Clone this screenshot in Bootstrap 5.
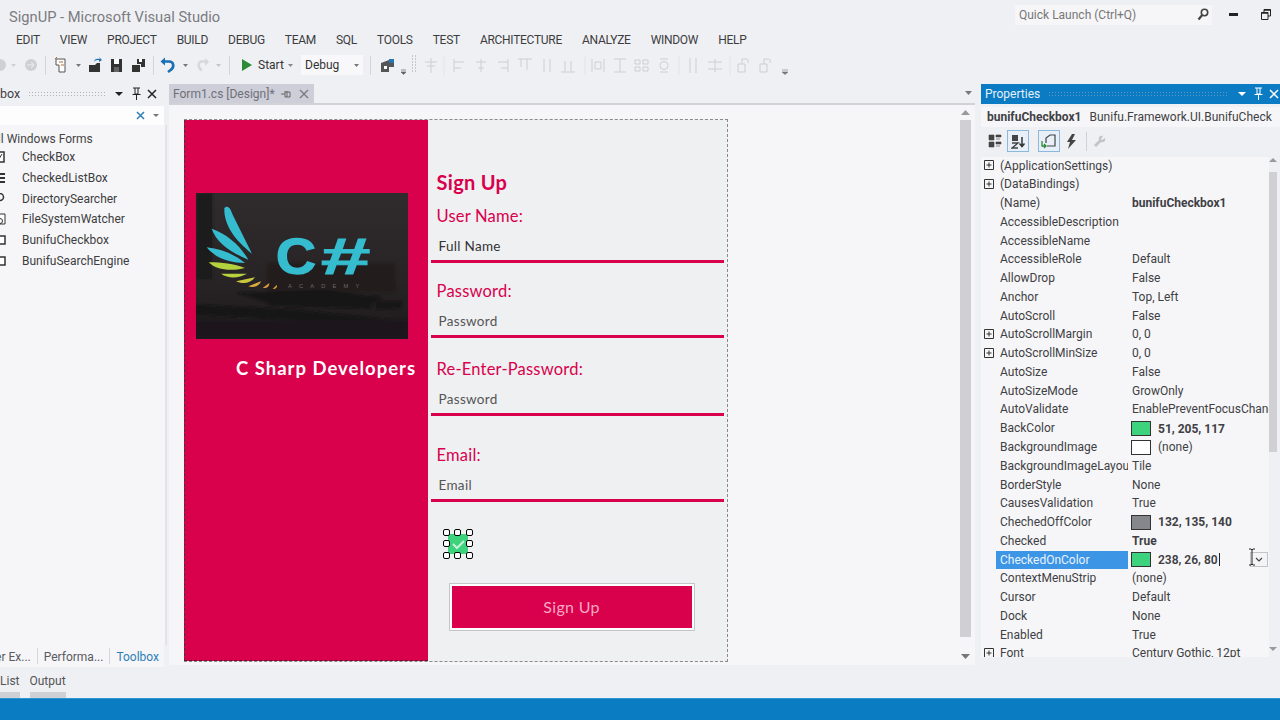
<!DOCTYPE html>
<html lang="en">
<head>
  <meta charset="UTF-8">
  <title>SignUP - Microsoft Visual Studio</title>
  <link href="https://cdn.jsdelivr.net/npm/bootstrap@5.3.2/dist/css/bootstrap.min.css" rel="stylesheet">
  <style>
    html, body { height: 100%; }
    body { width: 1280px; height: 720px; overflow: hidden; background: #eff0f4; color: #3f3f44; font-family: Roboto, "Noto Sans", sans-serif; font-size: 12px; line-height: 1; }
    svg { display: block; flex: none; }

    /* window chrome */
    .title-row { height: 30px; padding-left: 9px; }
    .title-text { font-size: 14.7px; color: #7b7b80; padding-top: 5px; }
    .quick-box { width: 197px; height: 20px; margin-top: -1px; background: #f6f6f8; color: #777; padding: 0 3px 0 4px; font-size: 12px; }
    .win-btns { width: 68px; padding-left: 17px; gap: 23px; margin-top: -2px; }
    .menu-row { height: 20px; padding-left: 16px; gap: 20px; font-size: 12px; letter-spacing: -.28px; color: #3d3d40; }
    .tool-row { height: 22px; margin-top: 4px; }
    .tool-sep { width: 1px; height: 19px; background: #d0d0d6; }
    .faint { opacity: .45; }

    /* panes */
    .panes { height: 614px; margin-top: 8px; }
    .pane-left { width: 167px; overflow: hidden; }
    .pane-mid { width: 806px; margin-left: 2px; }
    .pane-right { width: 299px; margin-left: 6px; overflow: hidden; }
    .dock-head { height: 20px; }
    .grip { height: 7px; background-image: radial-gradient(#b4b4b8 .6px, transparent .7px); background-size: 3px 3px; }
    .tb-head { padding-right: 9px; font-size: 12.5px; }
    .tb-search { height: 19px; margin-top: 2px; margin-right: 3px; background: #fdfdfe; padding-right: 5px; }
    .tb-body { height: 520px; background: #f6f6f8; border-right: 2px solid #e3e3e6; padding-top: 5px; }
    .tb-group { margin-left: -10px; height: 17px; color: #444; white-space: nowrap; }
    .tb-item { height: 20.7px; color: #3d3d40; }
    .tb-icon { width: 22px; margin-left: -8px; margin-right: 8px; }
    .tb-tabs { height: 22px; background: #f6f6f8; color: #5a5a60; margin-right: 3px; }
    .tb-tab { padding: 3px 6px 1px; border-right: 1px solid #d6d6da; white-space: nowrap; }
    .tb-tabs .on { color: #2d7fb8; border: 0; padding-right: 5px; }
    .low-tabs { margin-top: 4px; color: #555; gap: 10px; }
    .low-tab { height: 27px; padding-top: 4px; border-bottom: 6px solid #cfcfd6; }

    /* designer */
    .doc-tab { width: 145px; height: 19px; background: #cdced8; color: #6f7078; padding: 0 4px; white-space: nowrap; }
    .doc-strip { height: 21px; border-bottom: 2px solid #d2d2d6; padding-right: 3px; }
    .design { height: 560px; background: #f6f6f8; }
    .design-area { width: 788px; padding: 14px 0 0 15px; }
    .signup-form { width: 544px; height: 543px; background: #eff0f2; border: 1px dashed #8a8a8a; border-left: 0; }
    .red-side { width: 244px; background: #d9004c; color: #fff; border-left: 1px dashed #3a3a3a; border-bottom: 1px dashed #6a1030; padding: 73px 0 0 11px; }
    .logo-box { width: 212px; height: 146px; }
    .dev-name { font-family: Lato, sans-serif; font-weight: 700; font-size: 18.5px; letter-spacing: 1px; margin: 20px 0 0 40px; white-space: nowrap; }
    .form-side { width: 300px; padding: 0 0 0 3px; color: #d9004c; font-family: Lato, sans-serif; }
    .su-title { font-size: 20px; font-weight: 700; margin: 52px 0 0 6px; height: 20px; letter-spacing: .3px; }
    .su-label { font-size: 16.5px; margin-left: 6px; height: 18px; letter-spacing: .2px; white-space: nowrap; }
    .su-input { height: 18px; margin-top: 11px; padding: 3px 0 0 8px; color: #333; font-size: 13.5px; letter-spacing: .3px; }
    .su-input.hint { color: #555; }
    .su-line { width: 293px; height: 3px; background: #d9004c; margin-top: 5px; }
    .f1 { margin-top: 16px; }
    .f2 { margin-top: 20px; }
    .f3 { margin-top: 23px; }
    .f4 { margin-top: 31px; }
    .chk-wrap { width: 30px; height: 30px; margin: 27px 0 0 12px; position: relative; }
    .chk-box { width: 20px; height: 20px; margin: 5px; background: #3dd27c; border-radius: 3px; position: absolute; left: 0; top: 0; }
    .handle { width: 7px; height: 7px; position: absolute; background: #fff; border: 1.3px solid #000; border-radius: 2px; }
    .su-btn { width: 244px; height: 46px; margin: 25px 0 0 19px; background: #d9004c; color: #f8a8c4; border: 2px solid #fff; outline: 1px solid #c4c6ca; border-radius: 0; font-family: Lato, sans-serif; font-size: 16px; letter-spacing: .3px; padding: 0 0 1px; }
    .su-btn:hover { background: #d9004c; color: #f8a8c4; }
    .v-scroll { width: 11px; margin-left: 3px; height: 552px; padding-top: 3px; }
    .v-thumb { height: 517px; background: #cfcfd4; margin: 4px 0 16px; }

    /* properties */
    .prop-head { background: #0b7cc3; color: #e4f1fa; padding: 0 0 0 4px; }
    .prop-obj { height: 20px; margin-top: 3px; padding: 0 0 0 6px; white-space: nowrap; background: #f6f6f8; }
    .prop-tools { height: 24px; margin-top: 2px; padding-left: 4px; gap: 2px; }
    .pt-btn { width: 20px; height: 22px; }
    .pt-on { width: 22px; background: #e9eff8; border: 1px solid #8cb8dc; }
    .pt-flash { width: 18px; }
    .pt-gap { margin-left: 7px; }
    .prop-wrap { height: 500.5px; margin-top: 3.5px; overflow: hidden; }
    .prop-grid { width: 288px; background: #f6f6f8; overflow: hidden; padding-left: 3px; }
    .prop-row { height: 18.77px; white-space: nowrap; color: #3f3f44; }
    .prop-tree { width: 12px; }
    .prop-name { width: 132px; padding-left: 4px; overflow: hidden; height: 100%; line-height: 18px; }
    .prop-val { padding-left: 4px; line-height: 18px; overflow: hidden; flex: 1; height: 100%; }
    .swatch { width: 20px; height: 15px; border: 1px solid #333; margin-right: 7px; flex: none; margin-left: -1px; }
    .sw-green { background: #3dd27c; }
    .sw-grey { background: #84878c; }
    .sw-white { background: #fff; }
    .prop-sel .prop-name { background: #3d95e6; color: #e8f3fd; }
    .caret-bar { width: 1px; height: 13px; background: #222; margin-left: 1px; }
    .prop-scroll { width: 8px; height: 500px; padding-bottom: 5px; }
    .prop-thumb { height: 280px; background: #cfcfd4; margin-top: 9px; }
    .drop-btn { width: 18px; height: 15px; border: 1px solid #c4c4c8; margin: 0 1px 0 0; background: #f4f4f6; }
    .ibeam { position: absolute; left: 1247px; top: 548px; }

    .status-bar { height: 22px; background: #0a7cc2; border-top: 1px solid #2f94cf; }
  </style>
</head>
<body>
  <!-- Title -->
  <div class="title-row d-flex justify-content-between align-items-center">
    <div class="title-text">SignUP - Microsoft Visual Studio</div>
    <div class="d-flex align-items-center">
      <div class="quick-box d-flex justify-content-between align-items-center">
        <span>Quick Launch (Ctrl+Q)</span>
        <svg width="12" height="13" viewBox="0 0 12 13"><circle cx="7.5" cy="4.5" r="3.2" fill="none" stroke="#444" stroke-width="1.6"/><path d="M5.2 7 1.5 11.5" stroke="#444" stroke-width="2.2"/></svg>
      </div>
      <div class="win-btns d-flex align-items-center">
        <svg width="9" height="4" viewBox="0 0 9 4"><rect width="9" height="3" y="1" fill="#222"/></svg>
        <svg width="10" height="11" viewBox="0 0 10 11"><path d="M3 3V.5h6.5V7H7M.5 3.5H7v7H.5z" fill="none" stroke="#222"/><path d="M3 1h6.5M.5 4H7" stroke="#222" stroke-width="1.5"/></svg>
      </div>
    </div>
  </div>

  <!-- Menu -->
  <div class="menu-row d-flex align-items-center">
    <span>EDIT</span><span>VIEW</span><span>PROJECT</span><span>BUILD</span><span>DEBUG</span><span>TEAM</span><span>SQL</span><span>TOOLS</span><span>TEST</span><span>ARCHITECTURE</span><span>ANALYZE</span><span>WINDOW</span><span>HELP</span>
  </div>

  <!-- Toolbar -->
  <div class="tool-row d-flex align-items-center">
    <svg width="790" height="22" viewBox="0 0 790 22" id="toolIcons">
      <g fill="#cfcfd4">
        <circle cx="0" cy="11" r="6"/><circle cx="31" cy="11" r="6"/>
        <path d="M11 10h5l-2.500 3z"/>
      </g>
      <path d="M27 11h7M31 8l3 3-3 3" stroke="#eee" fill="none"/>
      <rect x="45" y="2" width="1" height="19" fill="#d4d4d8"/>
      <path d="M56 5h9v13h-6v-7h-3z" fill="#fff" stroke="#555"/><path d="M55 5l2 -2M59 8h4M61 11h3" stroke="#b86a2a"/>
      <path d="M76 10h5l-2.500 3z" fill="#777"/>
      <path d="M89 11h6l2-2h3v9H89z" fill="#333"/><path d="M94 8c0-3 3-4 6-3l-1-2 3 3-3 2v-2c-2 0-4 0-5 2z" fill="#1a72b8"/>
      <path d="M111 5h11v13h-11z" fill="#333"/><path d="M114 5h5v5h-5z" fill="#fff"/><rect x="114" y="13" width="5" height="5" fill="#666"/>
      <path d="M132 11h8v7h-8z" fill="#333"/><path d="M137 5h8v8h-4v-3h-4z" fill="#333"/><path d="M139 5h3v3h-3z" fill="#fff"/>
      <rect x="153" y="2" width="1" height="19" fill="#d4d4d8"/>
      <path d="M164 7.500h5c5 0 6 6 1 9l-2 1.500" fill="none" stroke="#1a6fb5" stroke-width="2.600"/><path d="M165 3.500v8l-4.500-4z" fill="#1a6fb5"/>
      <path d="M183 10h5l-2.500 3z" fill="#777"/>
      <path d="M208 7.500h-6c-4 0-5 6 0 9" fill="none" stroke="#d8d8dc" stroke-width="2.500"/><path d="M205 4l4 4-4 4z" fill="#d8d8dc"/>
      <path d="M216 10h5l-2.500 3z" fill="#c4c4c8"/>
      <rect x="229" y="2" width="1" height="19" fill="#d4d4d8"/>
      <path d="M242 5l10 6-10 6z" fill="#2e8b35"/>
      <path d="M288 10h5l-2.500 3z" fill="#888"/>
      <rect x="301" y="1" width="62" height="20" fill="#f8f8fa"/>
      <path d="M354 10h5l-2.500 3z" fill="#777"/>
      <rect x="370" y="2" width="1" height="19" fill="#d4d4d8"/>
      <path d="M381 9l8-3h5v7h-5v5h-8z" fill="#555"/><path d="M384 12h3v3h-3z" fill="#fff"/><path d="M389 5h5v4h-5z" fill="#2a74b0"/>
      <path d="M401 16h5M401 18h5l-2.500 2.500z" fill="#666" stroke="#666" stroke-width=".7"/>
      <path d="M412 2h1M415 2h1M412 5h1M415 5h1M412 8h1M415 8h1M412 11h1M415 11h1M412 14h1M415 14h1M412 17h1M415 17h1" stroke="#c8c8cc" stroke-width="2"/>
      <g class="faint" stroke="#a4a4aa" fill="none">
        <path d="M431 4v15M425 8h12M427 12h8"/>
        <path d="M444 2v19" stroke="#d4d4d8"/>
        <path d="M454 5v13M454 8h10M454 14h7"/>
        <path d="M481 5v13M476 8h10M478 14h6"/>
        <path d="M508 5v13M498 8h10M501 14h7"/>
        <path d="M518 5h14M521 5v8M527 5v11"/>
        <path d="M544 5v13M550 5v13"/>
        <path d="M561 18h14M565 7v10M571 7v10"/>
        <path d="M585 2v19" stroke="#d4d4d8"/>
        <path d="M592 5v13M604 5v13M595 8h6v7h-6z"/>
        <path d="M614 5h12M614 18h12M620 5v13"/>
        <path d="M635 6h5v4h-5zM643 6h5v4h-5zM635 13h5v4h-5zM643 13h5v4h-5z"/>
        <path d="M660 5h8M660 18h8"/><circle cx="664" cy="11.500" r="4"/>
        <path d="M679 2v19" stroke="#d4d4d8"/>
        <path d="M690 4v15M696 4v15"/>
        <path d="M708 8h14M708 15h14M715 5v13"/>
        <path d="M730 2v19" stroke="#d4d4d8"/>
        <path d="M738 10h7v8h-7zM742 10V5h5M748 5v4"/>
        <path d="M760 10h7v8h-7zM764 10V5h5M770 5v4"/>
      </g>
      <path d="M782 16h6M782 18h6l-3 2.500z" fill="#777" stroke="#777" stroke-width=".6"/>
      <text x="258" y="15" font-size="12" font-family="Roboto" fill="#333">Start</text>
      <text x="305" y="15" font-size="12" font-family="Roboto" fill="#333">Debug</text>
    </svg>
  </div>

  <div class="panes d-flex">
    <!-- Toolbox -->
    <div class="pane-left">
      <div class="dock-head tb-head d-flex align-items-center">
        <span>box</span>
        <div class="grip flex-grow-1 mx-2"></div>
        <svg width="44" height="14" viewBox="0 0 44 14"><path d="M1 5h8l-4 4z" fill="#222"/><path d="M19 1h7M21 1v6h3V1M18.500 7.500h8M22.500 8v5" stroke="#222" fill="none"/><path d="M34 3l8 8M42 3l-8 8" stroke="#222" stroke-width="1.500"/></svg>
      </div>
      <div class="tb-search d-flex justify-content-end align-items-center gap-2">
        <svg width="9" height="9" viewBox="0 0 9 9"><path d="M1 1l7 7M8 1 1 8" stroke="#2d7fb8" stroke-width="1.500"/></svg>
        <svg width="6" height="4" viewBox="0 0 6 4"><path d="M0 0h6L3 3z" fill="#777"/></svg>
      </div>
      <div class="tb-body">
        <div class="tb-group d-flex align-items-center">All Windows Forms</div>
        <div class="tb-item d-flex align-items-center"><span class="tb-icon"><svg width="14" height="12" viewBox="0 0 14 12"><path d="M3 1h9v10H3z" fill="#fff" stroke="#333" stroke-width="1.500"/><path d="M5 6l2 2 3-5" fill="none" stroke="#333"/></svg></span>CheckBox</div>
        <div class="tb-item d-flex align-items-center"><span class="tb-icon"><svg width="14" height="12" viewBox="0 0 14 12"><path d="M6 2h7M6 6h7M6 10h7" stroke="#333" stroke-width="2"/></svg></span>CheckedListBox</div>
        <div class="tb-item d-flex align-items-center"><span class="tb-icon"><svg width="14" height="12" viewBox="0 0 14 12"><circle cx="8" cy="4" r="3.500" fill="none" stroke="#333" stroke-width="1.500"/></svg></span>DirectorySearcher</div>
        <div class="tb-item d-flex align-items-center"><span class="tb-icon"><svg width="14" height="12" viewBox="0 0 14 12"><path d="M6 1h7v10H6z" fill="#fff" stroke="#333"/><circle cx="8" cy="8" r="2.500" fill="none" stroke="#333"/></svg></span>FileSystemWatcher</div>
        <div class="tb-item d-flex align-items-center"><span class="tb-icon"><svg width="14" height="12" viewBox="0 0 14 12"><path d="M6 2h7v8H6z" fill="#fff" stroke="#333" stroke-width="1.500"/></svg></span>BunifuCheckbox</div>
        <div class="tb-item d-flex align-items-center"><span class="tb-icon"><svg width="14" height="12" viewBox="0 0 14 12"><path d="M6 2h7v8H6z" fill="#fff" stroke="#333" stroke-width="1.500"/></svg></span>BunifuSearchEngine</div>
      </div>
      <div class="tb-tabs d-flex align-items-center justify-content-end">
        <span class="tb-tab">er Ex...</span><span class="tb-tab">Performa...</span><span class="tb-tab on">Toolbox</span>
      </div>
      <div class="low-tabs d-flex"><span class="low-tab">List</span><span class="low-tab">Output</span></div>
    </div>

    <!-- Designer -->
    <div class="pane-mid">
      <div class="doc-strip d-flex justify-content-between align-items-start">
        <div class="doc-tab d-flex align-items-center justify-content-between">
          <span>Form1.cs [Design]*</span>
          <svg width="30" height="10" viewBox="0 0 30 10"><path d="M1 5h4M5 2v6h5V3H5M7 2v6" stroke="#666" fill="none"/><path d="M20 1l8 8M28 1l-8 8" stroke="#7a7a82" stroke-width="1.300"/></svg>
        </div>
        <svg width="7" height="16" viewBox="0 0 7 16"><path d="M0 7h7l-3.500 4z" fill="#777"/></svg>
      </div>
      <div class="design d-flex">
        <div class="design-area">
          <div class="signup-form d-flex">
            <div class="red-side">
              <div class="logo-box">
                <svg width="212" height="146" viewBox="50 40 636 438">
                  <defs>
                    <filter id="soft"><feGaussianBlur stdDeviation="3"/></filter>
                    <linearGradient id="shade" x1="0" y1="0" x2="0" y2="1"><stop offset="0" stop-color="#302c2d"/><stop offset=".6" stop-color="#282425"/><stop offset="1" stop-color="#1d1a1b"/></linearGradient>
                  </defs>
                  <rect x="50" y="40" width="636" height="438" fill="url(#shade)"/>
                  <g filter="url(#soft)">
                    <rect x="50" y="40" width="50" height="260" fill="#1f1c1d"/>
                    <path d="M265 250h380v90H265z" fill="#221e1f"/>
                    <path d="M170 340l270-10 170 25-50 30-260-5z" fill="#191617"/>
                    <path d="M250 350l350 0-30 35-300-10z" fill="#141213"/>
                    <path d="M590 365h80l-5 20-75 5z" fill="#181516"/>
                    <path d="M50 375l300 15 320 35 10 10-250-10L50 405z" fill="#171415"/>
                    <path d="M50 420h636v55H50z" fill="#1c191a"/>
                  </g>
                  <g fill="#35bccf">
                    <path d="M135 85c12-12 20 5 25 20l58 117c-50-40-85-85-83-137z"/>
                    <path d="M97 147c45 15 85 50 110 93-50-20-95-50-110-93z"/>
                    <path d="M82 203c45 5 85 22 115 47-45 0-90-15-115-47z"/>
                  </g>
                  <path d="M88 248c40 0 75 5 109 17-40 10-85 8-109-17z" fill="#b4d23e"/>
                  <path d="M125 282h78c-25 14-55 16-78 0z" fill="#b8d13e"/>
                  <path d="M170 305l57-12c-12 18-37 22-57 12z" fill="#c9c83c"/>
                  <path d="M207 320l38-15c-6 15-22 20-38 15z" fill="#e0ab3e"/>
                  <path d="M250 325l20-15c0 10-7 17-20 15z" fill="#e09a3c"/>
                  <path d="M280 328l13-13c1 8-3 14-13 13z" fill="#dca038"/>
                  <text x="290" y="284" font-family="Liberation Sans, sans-serif" font-weight="700" font-size="152" fill="#35bccf" stroke="#35bccf" stroke-width="4" textLength="120" lengthAdjust="spacingAndGlyphs">C</text>
                  <text x="425" y="284" font-family="Liberation Sans, sans-serif" font-weight="700" font-size="152" fill="#35bccf" stroke="#35bccf" stroke-width="3" textLength="148" lengthAdjust="spacingAndGlyphs">#</text>
                  <text x="326" y="324" font-family="Liberation Sans, sans-serif" font-size="17" fill="#6c6a6b" textLength="214">ACADEMY</text>
                </svg>
              </div>
              <div class="dev-name">C Sharp Developers</div>
            </div>
            <div class="form-side">
              <div class="su-title">Sign Up</div>
              <div class="su-label f1">User Name:</div>
              <div class="su-input">Full Name</div>
              <div class="su-line"></div>
              <div class="su-label f2">Password:</div>
              <div class="su-input hint">Password</div>
              <div class="su-line"></div>
              <div class="su-label f3">Re-Enter-Password:</div>
              <div class="su-input hint">Password</div>
              <div class="su-line"></div>
              <div class="su-label f4">Email:</div>
              <div class="su-input hint">Email</div>
              <div class="su-line"></div>
              <div class="chk-wrap">
                <div class="chk-box">
                  <svg width="20" height="20" viewBox="0 0 20 20"><path d="M5 10l4 4 7-7" fill="none" stroke="#c8f3d8" stroke-width="2"/></svg>
                </div>
                <span class="handle" style="left:0;top:0"></span><span class="handle" style="left:11px;top:0"></span><span class="handle" style="left:23px;top:0"></span>
                <span class="handle" style="left:0;top:11px"></span><span class="handle" style="left:23px;top:11px"></span>
                <span class="handle" style="left:0;top:23px"></span><span class="handle" style="left:11px;top:23px"></span><span class="handle" style="left:23px;top:23px"></span>
              </div>
              <button type="button" class="btn su-btn d-block">Sign Up</button>
            </div>
          </div>
        </div>
        <div class="v-scroll">
          <svg width="11" height="8" viewBox="0 0 11 8"><path d="M1 7h9L5.500 2z" fill="#999"/></svg>
          <div class="v-thumb"></div>
          <svg width="11" height="8" viewBox="0 0 11 8"><path d="M1 1h9L5.500 6z" fill="#777"/></svg>
        </div>
      </div>
    </div>

    <!-- Properties -->
    <div class="pane-right">
      <div class="dock-head prop-head d-flex align-items-center">
        <span>Properties</span>
        <div class="grip flex-grow-1 mx-2 opacity-50"></div>
        <svg width="43" height="14" viewBox="0 0 43 14"><path d="M1 5h8l-4 4z" fill="#fff"/><path d="M18 1h7M20 1v6h3V1M17.500 7.500h8M21.500 8v5" stroke="#fff" fill="none"/><path d="M33 3l8 8M41 3l-8 8" stroke="#fff" stroke-width="1.500"/></svg>
      </div>
      <div class="prop-obj d-flex align-items-center"><b>bunifuCheckbox1</b><span class="ms-2">Bunifu.Framework.UI.BunifuCheck</span></div>
      <div class="prop-tools d-flex align-items-center">
        <span class="pt-btn d-flex align-items-center justify-content-center"><svg width="15" height="14" viewBox="0 0 15 14"><path d="M1 1h5v5H1zM8 1h5v2H8zM1 8h5v5H1zM8 8h5v2H8zM8 5h4M8 12h4" fill="#444" stroke="#444" stroke-width=".6"/></svg></span>
        <span class="pt-btn pt-on d-flex align-items-center justify-content-center"><svg width="15" height="15" viewBox="0 0 15 15"><path d="M1 1h6v6H1z" fill="#444"/><path d="M1 9h6L1 14h6" fill="none" stroke="#444" stroke-width="1.400"/><path d="M11 3v9M8.500 9.500l2.500 3 2.500-3" fill="none" stroke="#333" stroke-width="1.500"/></svg></span>
        <span class="pt-btn pt-on pt-gap d-flex align-items-center justify-content-center"><svg width="16" height="15" viewBox="0 0 16 15"><path d="M5 9V4l4-3h5v11H6" fill="none" stroke="#444" stroke-width="1.200"/><path d="M1 7v5h4M3 10l2 2-2 2" fill="none" stroke="#2e8b35" stroke-width="1.300"/></svg></span>
        <span class="pt-btn pt-flash d-flex align-items-center justify-content-center"><svg width="11" height="15" viewBox="0 0 11 15"><path d="M6 0 1 8h3L2 15l8-9H6l3-6z" fill="#444"/></svg></span>
        <span class="tool-sep ms-1"></span>
        <span class="pt-btn d-flex align-items-center justify-content-center"><svg width="13" height="13" viewBox="0 0 13 13"><path d="M12 3 9 5 8 4l2-3C7 0 5 2 6 5L1 10l2 2 5-5c3 1 5-1 4-4z" fill="#c4c4c8"/></svg></span>
      </div>
      <div class="prop-wrap d-flex">
        <div class="prop-grid">
          <div class="prop-row d-flex align-items-center"><span class="prop-tree"><svg width="11" height="11" viewBox="0 0 11 11"><path d="M.5.5h9v9h-9zM2.500 5h5M5 2.500v5" fill="none" stroke="#333"/></svg></span><span class="prop-name">(ApplicationSettings)</span><span class="prop-val"></span></div>
          <div class="prop-row d-flex align-items-center"><span class="prop-tree"><svg width="11" height="11" viewBox="0 0 11 11"><path d="M.5.5h9v9h-9zM2.500 5h5M5 2.500v5" fill="none" stroke="#333"/></svg></span><span class="prop-name">(DataBindings)</span><span class="prop-val"></span></div>
          <div class="prop-row d-flex align-items-center"><span class="prop-tree"></span><span class="prop-name">(Name)</span><span class="prop-val fw-bold">bunifuCheckbox1</span></div>
          <div class="prop-row d-flex align-items-center"><span class="prop-tree"></span><span class="prop-name">AccessibleDescription</span><span class="prop-val"></span></div>
          <div class="prop-row d-flex align-items-center"><span class="prop-tree"></span><span class="prop-name">AccessibleName</span><span class="prop-val"></span></div>
          <div class="prop-row d-flex align-items-center"><span class="prop-tree"></span><span class="prop-name">AccessibleRole</span><span class="prop-val">Default</span></div>
          <div class="prop-row d-flex align-items-center"><span class="prop-tree"></span><span class="prop-name">AllowDrop</span><span class="prop-val">False</span></div>
          <div class="prop-row d-flex align-items-center"><span class="prop-tree"></span><span class="prop-name">Anchor</span><span class="prop-val">Top, Left</span></div>
          <div class="prop-row d-flex align-items-center"><span class="prop-tree"></span><span class="prop-name">AutoScroll</span><span class="prop-val">False</span></div>
          <div class="prop-row d-flex align-items-center"><span class="prop-tree"><svg width="11" height="11" viewBox="0 0 11 11"><path d="M.5.5h9v9h-9zM2.500 5h5M5 2.500v5" fill="none" stroke="#333"/></svg></span><span class="prop-name">AutoScrollMargin</span><span class="prop-val">0, 0</span></div>
          <div class="prop-row d-flex align-items-center"><span class="prop-tree"><svg width="11" height="11" viewBox="0 0 11 11"><path d="M.5.5h9v9h-9zM2.500 5h5M5 2.500v5" fill="none" stroke="#333"/></svg></span><span class="prop-name">AutoScrollMinSize</span><span class="prop-val">0, 0</span></div>
          <div class="prop-row d-flex align-items-center"><span class="prop-tree"></span><span class="prop-name">AutoSize</span><span class="prop-val">False</span></div>
          <div class="prop-row d-flex align-items-center"><span class="prop-tree"></span><span class="prop-name">AutoSizeMode</span><span class="prop-val">GrowOnly</span></div>
          <div class="prop-row d-flex align-items-center"><span class="prop-tree"></span><span class="prop-name">AutoValidate</span><span class="prop-val">EnablePreventFocusChange</span></div>
          <div class="prop-row d-flex align-items-center"><span class="prop-tree"></span><span class="prop-name">BackColor</span><span class="prop-val d-flex align-items-center fw-bold"><span class="swatch sw-green"></span>51, 205, 117</span></div>
          <div class="prop-row d-flex align-items-center"><span class="prop-tree"></span><span class="prop-name">BackgroundImage</span><span class="prop-val d-flex align-items-center"><span class="swatch sw-white"></span>(none)</span></div>
          <div class="prop-row d-flex align-items-center"><span class="prop-tree"></span><span class="prop-name">BackgroundImageLayout</span><span class="prop-val">Tile</span></div>
          <div class="prop-row d-flex align-items-center"><span class="prop-tree"></span><span class="prop-name">BorderStyle</span><span class="prop-val">None</span></div>
          <div class="prop-row d-flex align-items-center"><span class="prop-tree"></span><span class="prop-name">CausesValidation</span><span class="prop-val">True</span></div>
          <div class="prop-row d-flex align-items-center"><span class="prop-tree"></span><span class="prop-name">ChechedOffColor</span><span class="prop-val d-flex align-items-center fw-bold"><span class="swatch sw-grey"></span>132, 135, 140</span></div>
          <div class="prop-row d-flex align-items-center"><span class="prop-tree"></span><span class="prop-name">Checked</span><span class="prop-val fw-bold">True</span></div>
          <div class="prop-row prop-sel d-flex align-items-center"><span class="prop-tree"></span><span class="prop-name">CheckedOnColor</span><span class="prop-val d-flex align-items-center fw-semibold"><span class="swatch sw-green"></span>238, 26, 80<span class="caret-bar"></span><span class="drop-btn ms-auto d-flex align-items-center justify-content-center"><svg width="8" height="5" viewBox="0 0 8 5"><path d="M1 1l3 3 3-3" fill="none" stroke="#444" stroke-width="1.200"/></svg></span></span></div>
          <div class="prop-row d-flex align-items-center"><span class="prop-tree"></span><span class="prop-name">ContextMenuStrip</span><span class="prop-val">(none)</span></div>
          <div class="prop-row d-flex align-items-center"><span class="prop-tree"></span><span class="prop-name">Cursor</span><span class="prop-val">Default</span></div>
          <div class="prop-row d-flex align-items-center"><span class="prop-tree"></span><span class="prop-name">Dock</span><span class="prop-val">None</span></div>
          <div class="prop-row d-flex align-items-center"><span class="prop-tree"></span><span class="prop-name">Enabled</span><span class="prop-val">True</span></div>
          <div class="prop-row d-flex align-items-center"><span class="prop-tree"><svg width="11" height="11" viewBox="0 0 11 11"><path d="M.5.5h9v9h-9zM2.500 5h5M5 2.500v5" fill="none" stroke="#333"/></svg></span><span class="prop-name">Font</span><span class="prop-val">Century Gothic, 12pt</span></div>
        </div>
        <div class="prop-scroll d-flex flex-column justify-content-between">
          <div>
            <svg width="8" height="6" viewBox="0 0 8 6"><path d="M0 5h8L4 1z" fill="#999"/></svg>
            <div class="prop-thumb"></div>
          </div>
          <svg width="8" height="6" viewBox="0 0 8 6"><path d="M0 1h8L4 5z" fill="#999"/></svg>
        </div>
      </div>
    </div>
  </div>

  <div class="status-bar"></div>

  <!-- mouse cursor -->
  <svg class="ibeam" width="10" height="18" viewBox="0 0 10 18"><path d="M2 1h2l1 1 1-1h2M5 2v14M2 17h2l1-1 1 1h2" fill="none" stroke="#222"/></svg>
</body>
</html>
